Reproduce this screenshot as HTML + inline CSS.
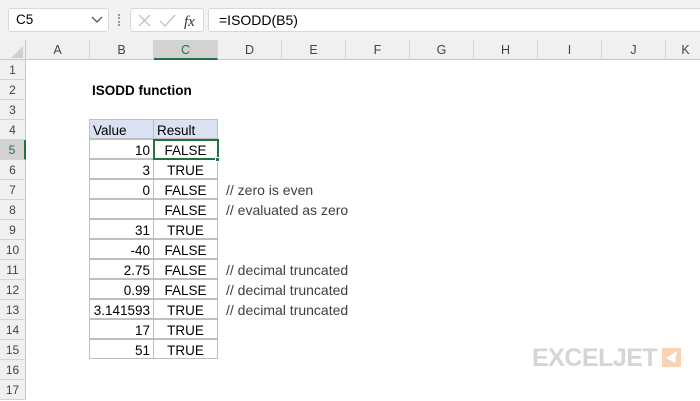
<!DOCTYPE html>
<html><head><style>
*{margin:0;padding:0;box-sizing:border-box}
body{width:700px;height:400px;position:relative;background:#fff;font-family:"Liberation Sans",Calibri,sans-serif;font-size:13.5px;color:#000;overflow:hidden}
.a{position:absolute}
.ch{position:absolute;top:40px;height:20px;line-height:20px;text-align:center;color:#444;font-size:12.5px;border-right:1px solid #d4d4d4;background:#f0f0f0;border-bottom:1px solid #c8c8c8}
.rh{position:absolute;left:0;width:26px;height:20px;line-height:21px;text-align:center;color:#444;font-size:12px;background:#f0f0f0;border-bottom:1px solid #d4d4d4;border-right:1px solid #c8c8c8}
.c{position:absolute;height:20px;line-height:21px;border:1px solid #bfbfbf;margin:-1px 0 0 -1px;width:65px;padding:0 3px}
.n{text-align:right}
.t{text-align:center}
.cm{position:absolute;left:226px;height:20px;line-height:21px;color:#404040;font-size:14px}
</style></head><body>
<div class="a" style="left:0;top:0;width:700px;height:40px;background:#f3f3f3"></div>
<div class="a" style="left:8px;top:8px;width:101px;height:24px;background:#fff;border:1px solid #d8d8d8;border-radius:3px;line-height:22px;padding-left:7px">C5</div>
<svg class="a" style="left:91px;top:16px" width="12" height="8"><path d="M1 1L6 6L11 1" stroke="#555" fill="none" stroke-width="1.3"/></svg>
<div class="a" style="left:118px;top:14px;width:2px;height:12px;border-left:2px dotted #999"></div>
<div class="a" style="left:130px;top:8px;width:74px;height:24px;background:#fff;border:1px solid #d8d8d8;border-radius:3px"></div>
<svg class="a" style="left:137px;top:13px" width="70" height="16"><path d="M2 2L13 13M13 2L2 13" stroke="#bbb" stroke-width="1.2"/><path d="M23 8L28 13L38 2" stroke="#bbb" stroke-width="1.2" fill="none"/><text x="47" y="13" font-family="Liberation Serif" font-style="italic" font-size="15" fill="#333">fx</text></svg>
<div class="a" style="left:208px;top:8px;width:500px;height:24px;background:#fff;border:1px solid #d8d8d8;border-radius:3px;line-height:22px;padding-left:10px;font-size:14px">=ISODD(B5)</div>
<div class="a" style="left:0;top:40px;width:26px;height:20px;background:#f0f0f0;border-right:1px solid #c8c8c8;border-bottom:1px solid #c8c8c8"></div>
<svg class="a" style="left:11px;top:46px" width="12" height="12"><path d="M12 0L12 12L0 12Z" fill="#d0d0d0"/></svg>
<div class="ch" style="left:26px;width:64px">A</div>
<div class="ch" style="left:90px;width:64px">B</div>
<div class="ch" style="left:154px;width:64px;background:#d2d2d2;color:#217346;border-bottom:2px solid #217346">C</div>
<div class="ch" style="left:218px;width:64px">D</div>
<div class="ch" style="left:282px;width:64px">E</div>
<div class="ch" style="left:346px;width:64px">F</div>
<div class="ch" style="left:410px;width:64px">G</div>
<div class="ch" style="left:474px;width:64px">H</div>
<div class="ch" style="left:538px;width:64px">I</div>
<div class="ch" style="left:602px;width:64px">J</div>
<div class="ch" style="left:666px;width:40px">K</div>
<div class="rh" style="top:60px">1</div><div class="rh" style="top:80px">2</div><div class="rh" style="top:100px">3</div><div class="rh" style="top:120px">4</div>
<div class="rh" style="top:140px;background:#d2d2d2;color:#217346;border-right:2px solid #217346">5</div>
<div class="rh" style="top:160px">6</div><div class="rh" style="top:180px">7</div><div class="rh" style="top:200px">8</div><div class="rh" style="top:220px">9</div><div class="rh" style="top:240px">10</div><div class="rh" style="top:260px">11</div><div class="rh" style="top:280px">12</div><div class="rh" style="top:300px">13</div><div class="rh" style="top:320px">14</div><div class="rh" style="top:340px">15</div><div class="rh" style="top:360px">16</div><div class="rh" style="top:380px">17</div>
<div class="a" style="left:92px;top:80px;height:20px;line-height:21px;font-weight:bold">ISODD function</div>
<div class="c" style="left:90px;top:120px;background:#d9e1f2">Value</div><div class="c" style="left:154px;top:120px;background:#d9e1f2">Result</div>
<div class="c n" style="left:90px;top:140px">10</div><div class="c t" style="left:154px;top:140px">FALSE</div>
<div class="c n" style="left:90px;top:160px">3</div><div class="c t" style="left:154px;top:160px">TRUE</div>
<div class="c n" style="left:90px;top:180px">0</div><div class="c t" style="left:154px;top:180px">FALSE</div>
<div class="c n" style="left:90px;top:200px"></div><div class="c t" style="left:154px;top:200px">FALSE</div>
<div class="c n" style="left:90px;top:220px">31</div><div class="c t" style="left:154px;top:220px">TRUE</div>
<div class="c n" style="left:90px;top:240px">-40</div><div class="c t" style="left:154px;top:240px">FALSE</div>
<div class="c n" style="left:90px;top:260px">2.75</div><div class="c t" style="left:154px;top:260px">FALSE</div>
<div class="c n" style="left:90px;top:280px">0.99</div><div class="c t" style="left:154px;top:280px">FALSE</div>
<div class="c n" style="left:90px;top:300px">3.141593</div><div class="c t" style="left:154px;top:300px">TRUE</div>
<div class="c n" style="left:90px;top:320px">17</div><div class="c t" style="left:154px;top:320px">TRUE</div>
<div class="c n" style="left:90px;top:340px">51</div><div class="c t" style="left:154px;top:340px">TRUE</div>
<div class="a" style="left:153px;top:139px;width:66px;height:21px;border:2px solid #217346"></div>
<div class="a" style="left:215px;top:157px;width:5px;height:5px;background:#217346;border:1px solid #fff"></div>
<div class="cm" style="top:180px">// zero is even</div>
<div class="cm" style="top:200px">// evaluated as zero</div>
<div class="cm" style="top:260px">// decimal truncated</div>
<div class="cm" style="top:280px">// decimal truncated</div>
<div class="cm" style="top:300px">// decimal truncated</div>
<div class="a" style="left:532px;top:344px;font-weight:bold;font-size:25px;color:#d5d5d5;letter-spacing:-0.5px;line-height:28px">EXCELJET</div>
<svg class="a" style="left:662px;top:348px" width="19" height="19"><rect width="19" height="19" fill="#f8d3b5"/><path d="M15 3L4 10L13 15Z" fill="#fff"/></svg>
</body></html>
